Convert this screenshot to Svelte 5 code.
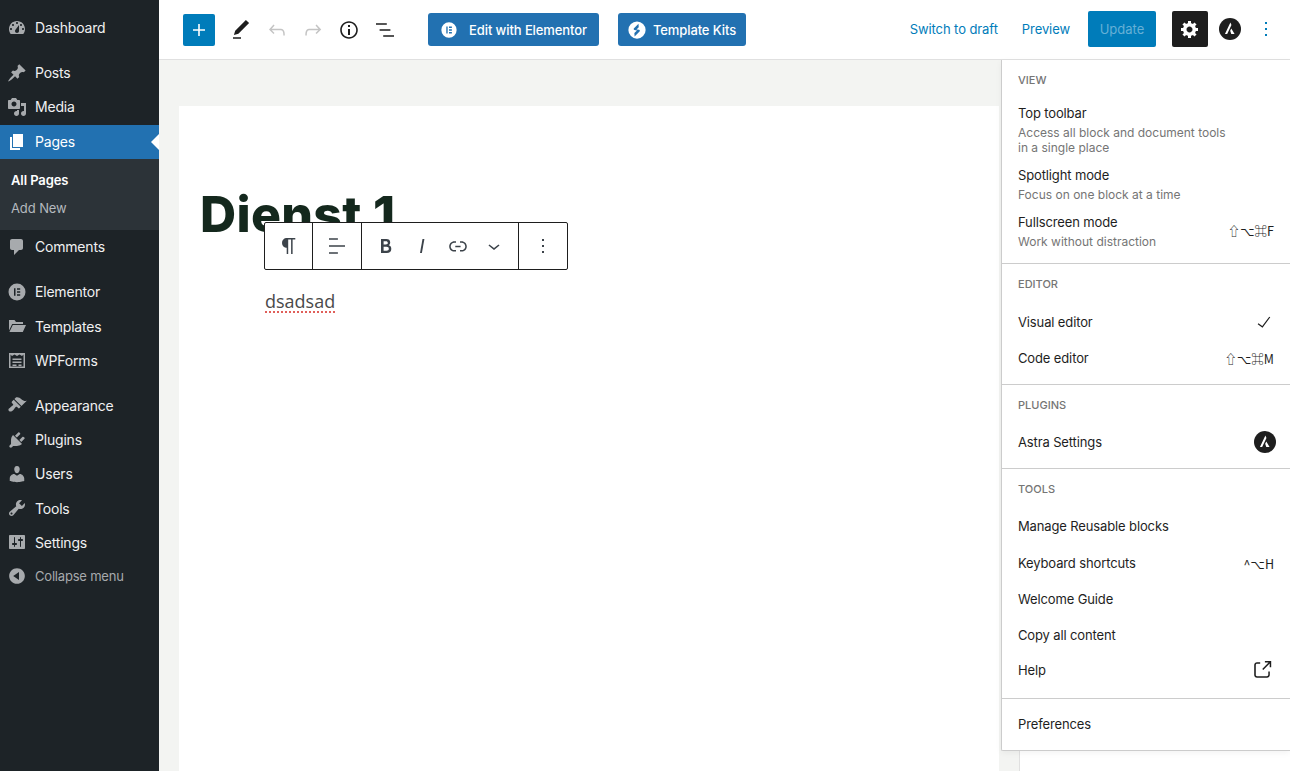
<script lang="ts">
  // Block editor screen: admin menu on the left, editor top bar, canvas, options menu open.
  const dashicons = {
    dashboard: "M3.76 16h12.48c1.1-1.37 1.76-3.11 1.76-5 0-4.42-3.58-8-8-8s-8 3.58-8 8c0 1.89.66 3.63 1.76 5zM10 4c.55 0 1 .45 1 1s-.45 1-1 1-1-.45-1-1 .45-1 1-1zM6 6c.55 0 1 .45 1 1s-.45 1-1 1-1-.45-1-1 .45-1 1-1zm8 0c.55 0 1 .45 1 1s-.45 1-1 1-1-.45-1-1 .45-1 1-1zm-5.37 5.55L12 7v6c0 1.1-.9 2-2 2s-2-.9-2-2c0-.57.24-1.08.63-1.45zM4 10c.55 0 1 .45 1 1s-.45 1-1 1-1-.45-1-1 .45-1 1-1zm12 0c.55 0 1 .45 1 1s-.45 1-1 1-1-.45-1-1 .45-1 1-1z",
    pin: "M10.44 3.02l1.82-1.82 6.36 6.35-1.83 1.82c-1.05-.68-2.48-.57-3.41.36l-.75.75c-.92.93-1.04 2.35-.35 3.41l-1.83 1.82-2.41-2.41-2.8 2.79c-.42.42-3.38 2.71-3.8 2.29s1.86-3.39 2.28-3.81l2.79-2.79L4.1 9.36l1.83-1.82c1.05.69 2.48.57 3.41-.36l.75-.75c.93-.92 1.04-2.35.35-3.41z",
    media: "M13 11V4c0-.55-.45-1-1-1h-1.67L9 1H5L3.67 3H2c-.55 0-1 .45-1 1v7c0 .55.45 1 1 1h10c.55 0 1-.45 1-1zM7 4.5c1.38 0 2.5 1.12 2.5 2.5S8.38 9.5 7 9.5 4.5 8.38 4.5 7 5.62 4.5 7 4.5zM14 6h5v10.5c0 1.38-1.12 2.5-2.5 2.5S14 17.88 14 16.5s1.12-2.5 2.5-2.5c.17 0 .34.02.5.05V9h-3V6zm-4 8.05V13h2v3.5c0 1.38-1.12 2.5-2.5 2.5S7 17.88 7 16.5 8.12 14 9.5 14c.17 0 .34.02.5.05z",
    page: "M6 15V2h10v13H6zm-1 1h8v2H3V5h2v11z",
    comment: "M5 2h9c1.1 0 2 .9 2 2v7c0 1.1-.9 2-2 2h-2l-5 5v-5H5c-1.1 0-2-.9-2-2V4c0-1.1.9-2 2-2z",
    elementor: "M10 1.5a8.5 8.5 0 1 0 0 17 8.5 8.5 0 0 0 0-17zM7 6.2h1.5v7.6H7zm3 0h3.2v1.5H10zm0 3h3.2v1.5H10zm0 3.1h3.2v1.5H10z",
    folder: "M2 4h5.5l1.5 2h7v2H5.2L2 14.5zM5.8 9H19l-3.2 7H2.4z",
    forms: "M2 3h16v15H2zm1.5 1.5v12h13v-12l-1.5 1.5-2.5-1.5L10 6 7.5 4.5 5 6zm2 4h9v1.5h-9zm0 3h9v1.5h-9zm0 3h4v1.5h-4zm6 0h3v1.5h-3z",
    brush: "M14.48 11.06L7.41 3.99l1.5-1.5c.5-.56 2.3-.47 3.51.32 1.21.8 1.43 1.28 2.91 2.1 1.18.64 2.45 1.26 4.45.85zm-.71.71L6.7 4.7 4.93 6.47c-.39.39-.39 1.02 0 1.41l1.06 1.06c.39.39.39 1.03 0 1.42-.6.6-1.43 1.11-2.21 1.69-.35.26-.7.53-1.01.84C1.43 13.23.91 14.93 2 16.03c1.08 1.08 2.79.56 4.15-.78.31-.31.58-.66.85-1.01.58-.78 1.09-1.61 1.69-2.21.39-.39 1.02-.39 1.41 0l1.06 1.06c.39.39 1.02.39 1.41 0z",
    plugin: "M13.11 4.36L9.87 7.6 8 5.73l3.24-3.24c.35-.34 1.05-.2 1.56.32.52.51.66 1.21.31 1.55zm-8 1.77l.91-1.12 9.01 9.01-1.19.84c-.71.71-2.63 1.16-3.82 1.16H6.14L4.9 17.26c-.59.59-1.54.59-2.12 0-.59-.58-.59-1.53 0-2.12l1.24-1.24v-3.88c0-1.13.4-3.19 1.09-3.89zm7.26 3.97l3.24-3.24c.34-.35 1.04-.21 1.55.31.52.51.66 1.21.31 1.55l-3.24 3.25z",
    users: "M10 9.25c-2.27 0-2.73-3.44-2.73-3.44C7 4.02 7.82 2 9.97 2c2.16 0 2.98 2.02 2.71 3.81 0 0-.41 3.44-2.68 3.44zm0 2.57L12.72 10c2.39 0 4.52 2.33 4.52 4.53v2.49s-3.65 1.13-7.24 1.13c-3.65 0-7.24-1.13-7.24-1.13v-2.49c0-2.25 1.94-4.48 4.47-4.48z",
    tools: "M16.68 9.77c-1.34 1.34-3.3 1.67-4.95.99l-5.41 6.52c-.99.99-2.59.99-3.58 0s-.99-2.59 0-3.57l6.52-5.42c-.68-1.65-.35-3.61.99-4.95 1.28-1.28 3.12-1.62 4.72-1.06l-2.89 2.89 2.82 2.82 2.86-2.87c.53 1.58.18 3.39-1.08 4.65zM3.81 16.21c.4.39 1.04.39 1.43 0 .4-.4.4-1.04 0-1.43-.39-.4-1.03-.4-1.43 0-.39.39-.39 1.03 0 1.43z",
    settings: "M18 16V4c0-.55-.45-1-1-1H3c-.55 0-1 .45-1 1v12c0 .55.45 1 1 1h14c.55 0 1-.45 1-1zM8 11h1c.55 0 1 .45 1 1s-.45 1-1 1H8v1.5c0 .28-.22.5-.5.5s-.5-.22-.5-.5V13H6c-.55 0-1-.45-1-1s.45-1 1-1h1V5.5c0-.28.22-.5.5-.5s.5.22.5.5V11zm5-2h-1c-.55 0-1-.45-1-1s.45-1 1-1h1V5.5c0-.28.22-.5.5-.5s.5.22.5.5V7h1c.55 0 1 .45 1 1s-.45 1-1 1h-1v5.5c0 .28-.22.5-.5.5s-.5-.22-.5-.5V9z",
    collapse: "M10 2.16c4.33 0 7.84 3.51 7.84 7.84s-3.51 7.84-7.84 7.84S2.16 14.33 2.16 10 5.71 2.16 10 2.16zm2 11.72V6.12L6.18 9.97z",
  };

  const wp = {
    plus: "M18 11.2h-5.2V6h-1.6v5.2H6v1.6h5.2V18h1.6v-5.2H18z",
    pencil: "M20.1 5.1L16.9 2 6.2 12.7l-1.3 4.4 4.5-1.3L20.1 5.1zM4 20.8h8v-1.5H4v1.5z",
    undo: "M18.3 11.7c-.6-.6-1.4-.9-2.3-.9H6.7l2.9-3.3-1.1-1-4.5 5L8.5 16l1-1-2.7-2.7H16c.5 0 .9.2 1.3.5 1 1 1 3.4 1 4.5v.3h1.5v-.2c0-1.5 0-4.3-1.5-5.7z",
    redo: "M15.6 6.5l-1.1 1 2.9 3.3H8c-.9 0-1.7.3-2.3.9-1.4 1.5-1.4 4.2-1.4 5.6v.2h1.5v-.3c0-1.1 0-3.5 1-4.5.3-.3.7-.5 1.3-.5h9.2L14.5 15l1.1 1.1 4.6-4.6-4.6-5z",
    info: "M12 3.2c-4.8 0-8.8 3.9-8.8 8.8 0 4.8 3.9 8.8 8.8 8.8 4.8 0 8.8-3.9 8.8-8.8 0-4.8-4-8.8-8.8-8.8zm0 16c-4 0-7.2-3.3-7.2-7.2C4.8 8 8 4.8 12 4.8s7.2 3.3 7.2 7.2c0 4-3.2 7.2-7.2 7.2zM11 17h2v-6h-2v6zm0-8h2V7h-2v2z",
    list: "M13.8 5.2H3v1.5h10.8V5.2zm-3.6 12v1.5H21v-1.5H10.2zm7.2-6H6.6v1.5h10.8v-1.5z",
    cog: "M20 14h-2.18c-.17.7-.44 1.35-.81 1.93l1.54 1.54-2.1 2.1-1.54-1.54c-.58.36-1.23.63-1.91.79V21h-3v-2.18c-.68-.16-1.33-.43-1.91-.79l-1.54 1.54-2.12-2.12 1.54-1.54c-.36-.58-.63-1.23-.79-1.91H3v-2.97h2.17c.16-.7.44-1.35.8-1.94L4.43 7.55l2.1-2.1 1.54 1.54c.58-.37 1.24-.64 1.93-.81V4h3v2.18c.68.16 1.33.43 1.91.79l1.54-1.54 2.12 2.12-1.54 1.54c.36.59.64 1.24.8 1.94H20V14zm-8.5 1.5c1.66 0 3-1.34 3-3s-1.34-3-3-3-3 1.34-3 3 1.34 3 3 3z",
    more: "M13 19h-2v-2h2v2zm0-6h-2v-2h2v2zm0-6h-2V5h2v2z",
    para: "M18.3 4H9.9v-.1l-.9.2c-2.3.4-4 2.4-4 4.8s1.7 4.4 4 4.8l.7.1V20h1.5V5.5h2.9V20h1.5V5.5h2.7V4z",
    align: "M4 19.8h8.9v-1.5H4v1.5zm8.9-15.6H4v1.5h8.9V4.2zm-8.9 7v1.5h16v-1.5H4z",
    bold: "M14.7 11.3c1-.6 1.5-1.6 1.5-3 0-2.3-1.3-3.4-4-3.4H7v14h5.8c1.4 0 2.5-.3 3.3-1 .8-.7 1.2-1.7 1.2-2.9.1-1.9-.8-3.1-2.6-3.7zm-5.1-4h2.3c.6 0 1.1.1 1.4.4.3.3.5.7.5 1.2s-.2 1-.5 1.2c-.3.3-.8.4-1.4.4H9.6V7.3zm4.6 9c-.4.3-1 .4-1.7.4H9.6v-3.9h2.9c.7 0 1.3.2 1.7.5.4.3.6.8.6 1.5s-.2 1.2-.6 1.5z",
    italic: "M12.5 5L10 19h1.9l2.5-14z",
    link: "M15.6 7.2H14v1.5h1.6c2 0 3.7 1.7 3.7 3.7s-1.7 3.7-3.7 3.7H14v1.5h1.6c2.8 0 5.2-2.3 5.2-5.2 0-2.9-2.3-5.2-5.2-5.2zM4.7 12.4c0-2 1.7-3.7 3.7-3.7H10V7.2H8.4c-2.9 0-5.2 2.3-5.2 5.2 0 2.9 2.3 5.2 5.2 5.2H10v-1.5H8.4c-2 0-3.7-1.7-3.7-3.7zm4.6.9h5.3v-1.5H9.3v1.5z",
    chevron: "M17.5 11.6L12 16l-5.5-4.4.9-1.2L12 14l4.5-3.6 1 1.2z",
    check: "M18.3 5.6L9.9 16.9l-4.6-3.4-.9 1.2 5.8 4.3 9.3-12.6z",
    external: "M18.2 17c0 .7-.6 1.2-1.2 1.2H7c-.7 0-1.2-.6-1.2-1.2V7c0-.7.6-1.2 1.2-1.2h3.2V4.2H7C5.5 4.2 4.2 5.5 4.2 7v10c0 1.5 1.2 2.8 2.8 2.8h10c1.5 0 2.8-1.2 2.8-2.8v-3.6h-1.5V17zM14.9 3v1.5h3.7l-6.4 6.4 1.1 1.1 6.4-6.4v3.7h1.5V3h-6.8z",
  };

  const astra = "M12.4 5 6.5 17.5h2.4L13.6 7.6zM13.4 11.5l-1.2 2.5 1.2 3.5h3.6z";
  const bolt = "M14 3.5 8 9.8c-.8.9-.4 2 .7 2.2l3.3.5-3.5 3.6.3 4.4 6.6-6.6c.8-.9.4-2-.7-2.2L11.3 11.3l3-3z";

  const menuGroups = [
    [{ label: "Dashboard", icon: dashicons.dashboard }],
    [
      { label: "Posts", icon: dashicons.pin },
      { label: "Media", icon: dashicons.media },
      { label: "Pages", icon: dashicons.page, active: true, sub: ["All Pages", "Add New"] },
      { label: "Comments", icon: dashicons.comment },
    ],
    [
      { label: "Elementor", icon: dashicons.elementor },
      { label: "Templates", icon: dashicons.folder },
      { label: "WPForms", icon: dashicons.forms },
    ],
    [
      { label: "Appearance", icon: dashicons.brush },
      { label: "Plugins", icon: dashicons.plugin },
      { label: "Users", icon: dashicons.users },
      { label: "Tools", icon: dashicons.tools },
      { label: "Settings", icon: dashicons.settings },
      { label: "Collapse menu", icon: dashicons.collapse, muted: true },
    ],
  ];

  const sections = [
    {
      title: "Editor",
      rows: [
        { label: "Visual editor", check: true },
        { label: "Code editor", keys: "⇧⌥⌘M" },
      ],
    },
    { title: "Plugins", rows: [{ label: "Astra Settings", astra: true }] },
    {
      title: "Tools",
      rows: [
        { label: "Manage Reusable blocks" },
        { label: "Keyboard shortcuts", keys: "^⌥H" },
        { label: "Welcome Guide" },
        { label: "Copy all content" },
        { label: "Help", external: true },
      ],
    },
  ];
</script>

{#snippet icon(d, size = 24, box = 24)}
  <svg class="ic" width={size} height={size} viewBox="0 0 {box} {box}" fill="currentColor" aria-hidden="true"><path {d} /></svg>
{/snippet}

<div class="screen">
  <nav class="adminmenu">
    {#each menuGroups as group}
      <ul class="group">
        {#each group as item}
          <li class="item" class:active={item.active} class:muted={item.muted}>
            {@render icon(item.icon, 20, 20)}
            <span>{item.label}</span>
          </li>
          {#if item.sub}
            <ul class="sub">
              <li class="current">{item.sub[0]}</li>
              <li>{item.sub[1]}</li>
            </ul>
          {/if}
        {/each}
      </ul>
    {/each}
  </nav>

  <div class="editor">
    <header class="topbar">
      <div class="left">
        <button class="inserter">{@render icon(wp.plus)}</button>
        <div class="tools">
          <button>{@render icon(wp.pencil)}</button>
          <button class="off">{@render icon(wp.undo)}</button>
          <button class="off">{@render icon(wp.redo)}</button>
          <button>{@render icon(wp.info)}</button>
          <button>{@render icon(wp.list)}</button>
        </div>
        <button class="blue elementor">
          <svg width="18" height="18" viewBox="0 0 20 20" aria-hidden="true"><path fill="#fff" d={dashicons.elementor} /></svg>
          Edit with Elementor
        </button>
        <button class="blue kits">
          <svg width="18" height="18" viewBox="0 0 24 24" aria-hidden="true"><circle cx="12" cy="12" r="11.5" fill="#fff" /><path fill="#2271b1" d={bolt} /></svg>
          Template Kits
        </button>
      </div>
      <div class="right">
        <a href="#draft">Switch to draft</a>
        <a href="#preview">Preview</a>
        <button class="update">Update</button>
        <button class="settings">{@render icon(wp.cog)}</button>
        <svg class="astra-top" width="22" height="22" viewBox="0 0 24 24" aria-hidden="true"><circle cx="12" cy="12" r="12" fill="#1e1e1e" /><path fill="#fff" d={astra} /></svg>
        <button class="dots">{@render icon(wp.more)}</button>
      </div>
    </header>

    <div class="body">
      <main class="canvas">
        <div class="paper">
          <h1>Dienst 1</h1>
          <p><span class="typo">dsadsad</span></p>
          <div class="blocktools">
            <div class="tgroup wide">{@render icon(wp.para)}</div>
            <div class="tgroup wide second">{@render icon(wp.align)}</div>
            <div class="tgroup">
              <span class="cell">{@render icon(wp.bold)}</span>
              <span class="cell">{@render icon(wp.italic)}</span>
              <span class="cell">{@render icon(wp.link)}</span>
              <span class="cell">{@render icon(wp.chevron)}</span>
            </div>
            <div class="tgroup wide last">{@render icon(wp.more)}</div>
          </div>
        </div>
      </main>
      <aside class="inspector"></aside>
    </div>

    <div class="options">
      <section class="view">
        <h2>View</h2>
        <div class="opt">
          <b>Top toolbar</b>
          <small>Access all block and document tools<br />in a single place</small>
        </div>
        <div class="opt">
          <b>Spotlight mode</b>
          <small>Focus on one block at a time</small>
        </div>
        <div class="opt withkeys">
          <div>
            <b>Fullscreen mode</b>
            <small>Work without distraction</small>
          </div>
          <kbd>⇧⌥⌘F</kbd>
        </div>
      </section>
      {#each sections as s}
        <section>
          <h2>{s.title}</h2>
          {#each s.rows as r}
            <div class="row">
              <span>{r.label}</span>
              {#if r.keys}<kbd>{r.keys}</kbd>{/if}
              {#if r.check}{@render icon(wp.check, 20)}{/if}
              {#if r.external}{@render icon(wp.external)}{/if}
              {#if r.astra}
                <svg class="astra-row" width="22" height="22" viewBox="0 0 24 24" aria-hidden="true"><circle cx="12" cy="12" r="12" fill="#1e1e1e" /><path fill="#fff" d={astra} /></svg>
              {/if}
            </div>
          {/each}
        </section>
      {/each}
      <section class="prefs">
        <div class="row"><span>Preferences</span></div>
      </section>
    </div>
  </div>
</div>

<style>
  :global(body) {
    margin: 0;
    background: #fff;
    font-family: Inter, "Liberation Sans", sans-serif;
  }
  .screen {
    display: flex;
    width: 1290px;
    height: 771px;
    overflow: hidden;
  }
  ul {
    list-style: none;
    margin: 0;
    padding: 0;
  }
  button {
    border: 0;
    background: none;
    padding: 0;
    font: inherit;
    color: inherit;
    display: flex;
    align-items: center;
    justify-content: center;
  }
  .ic {
    display: block;
    flex: none;
  }

  /* admin menu */
  .adminmenu {
    width: 159px;
    flex: none;
    background: #1d2327;
    padding-top: 10.5px;
    box-sizing: border-box;
  }
  .group {
    margin-bottom: 11px;
  }
  .item {
    height: 34.2px;
    display: flex;
    align-items: center;
    gap: 8px;
    padding-left: 7px;
    font-size: 14px;
    letter-spacing: -0.2px;
    color: #f0f0f1;
    position: relative;
  }
  .item .ic {
    color: #a7aaad;
    width: 20px;
    height: 20px;
  }
  .item.active {
    margin-top: 0.6px;
    background: #2271b1;
    color: #fff;
  }
  .item.active .ic {
    color: #fff;
  }
  .item.active::after {
    content: "";
    position: absolute;
    right: 0;
    top: 50%;
    margin-top: -8px;
    border: 8px solid transparent;
    border-left: 0;
    border-right-color: #fff;
  }
  .item.muted,
  .item.muted .ic {
    color: #a7aaad;
    font-size: 13px;
  }
  .sub {
    height: 70.8px;
    background: #2c3338;
    padding: 7px 0 0 11px;
    box-sizing: border-box;
    font-size: 13px;
    letter-spacing: -0.1px;
    color: #b4b9be;
  }
  .sub li {
    height: 28px;
    line-height: 28px;
  }
  .sub .current {
    color: #fff;
    font-weight: 600;
  }

  /* top bar */
  .editor {
    flex: 1;
    min-width: 0;
    display: flex;
    flex-direction: column;
    position: relative;
  }
  .topbar {
    height: 60px;
    flex: none;
    box-sizing: border-box;
    border-bottom: 1px solid #e0e0e0;
    background: #fff;
    display: flex;
    align-items: center;
    justify-content: space-between;
    padding: 0 12px 0 24px;
  }
  .left,
  .right,
  .tools {
    display: flex;
    align-items: center;
  }
  .right {
    margin-top: -1px;
  }
  .inserter {
    width: 32px;
    height: 32px;
    background: #007cba;
    color: #fff;
    border-radius: 2px;
  }
  .tools {
    margin-left: 8px;
    color: #1e1e1e;
  }
  .tools button {
    width: 36px;
    height: 36px;
  }
  .tools .off {
    color: #c4c4c4;
  }
  .blue {
    height: 33px;
    background: #2271b1;
    color: #fff;
    border-radius: 3px;
    font-size: 13px;
    font-weight: 500;
    letter-spacing: -0.1px;
    white-space: nowrap;
  }
  .elementor {
    width: 171px;
    margin-left: 25px;
    gap: 11px;
  }
  .kits {
    width: 128px;
    margin-left: 19px;
    gap: 7px;
  }
  .right a {
    font-size: 13px;
    letter-spacing: -0.08px;
    color: #007cba;
    text-decoration: none;
    margin-right: 24px;
  }
  .right a:nth-child(2) {
    margin-right: 18px;
  }
  .update {
    width: 68px;
    height: 36px;
    background: #007cba;
    color: #66b0d6;
    font-size: 13px;
    border-radius: 2px;
  }
  .settings {
    width: 36px;
    height: 36px;
    margin-left: 16px;
    background: #1e1e1e;
    color: #fff;
    border-radius: 2px;
  }
  .astra-top {
    margin-left: 11px;
  }
  .dots {
    width: 24px;
    height: 36px;
    margin-left: 13px;
    color: #007cba;
  }

  /* canvas */
  .body {
    flex: 1;
    display: flex;
    min-height: 0;
  }
  .canvas {
    width: 860px;
    flex: none;
    box-sizing: border-box;
    background: #f3f4f2;
    padding: 46px 20px 0;
  }
  .paper {
    height: 100%;
    background: #fff;
    position: relative;
    padding: 1px 21px 0;
    box-sizing: border-box;
  }
  .inspector {
    flex: 1;
    background: #fff;
    border-left: 1px solid #e0e0e0;
  }
  h1 {
    margin: 77px 0 0;
    font-family: Inter, sans-serif;
    font-weight: 800;
    font-size: 50px;
    letter-spacing: 0.3px;
    line-height: 60px;
    color: #14281d;
  }
  p {
    margin: 45px 0 0 65px;
    font-family: "Open Sans", sans-serif;
    font-size: 18px;
    line-height: 24px;
    color: #4a4a4a;
  }
  .typo {
    text-decoration: underline dotted #e0605a 2px;
    text-underline-offset: 3px;
  }
  .blocktools {
    position: absolute;
    left: 85px;
    top: 116px;
    height: 48px;
    box-sizing: border-box;
    display: flex;
    background: #fff;
    border: 1px solid #1e1e1e;
    border-radius: 2px;
    color: #3c434a;
  }
  .tgroup {
    display: flex;
    align-items: center;
    justify-content: center;
    border-right: 1px solid #1e1e1e;
    padding: 0 6px;
  }
  .tgroup.wide {
    width: 48px;
    padding: 0;
    box-sizing: border-box;
  }
  .tgroup.second {
    width: 49px;
  }
  .tgroup.last {
    border-right: 0;
  }
  .cell {
    width: 36px;
    display: flex;
    justify-content: center;
  }

  /* options dropdown */
  .options {
    position: absolute;
    top: 60px;
    right: 0;
    width: 289px;
    box-sizing: border-box;
    background: #fff;
    border: 1px solid #ccc;
    border-width: 0 0 1px 1px;
    border-radius: 0 0 0 2px;
    box-shadow: 0 2px 6px rgba(0, 0, 0, 0.05);
    color: #1e1e1e;
    font-size: 13px;
    letter-spacing: -0.13px;
  }
  section {
    padding: 12px 16px 8px;
    border-top: 1px solid #ccc;
  }
  section:first-child {
    border-top: 0;
    padding-top: 12px;
    padding-bottom: 14px;
  }
  section:nth-child(n + 3) h2 {
    margin-bottom: 11px;
  }
  section:nth-child(4) {
    padding-bottom: 11px;
  }
  section:nth-child(4) .row:nth-child(2) {
    margin-bottom: 1px;
  }
  section:nth-child(4) .row:last-child {
    height: 34px;
  }
  h2 {
    margin: 0 0 12px;
    font-size: 11px;
    line-height: 16px;
    font-weight: 500;
    letter-spacing: 0;
    text-transform: uppercase;
    color: #757575;
  }
  .opt {
    margin-bottom: 10px;
  }
  .opt:last-child {
    margin-bottom: 0;
  }
  .view h2 {
    margin-bottom: 15px;
  }
  b {
    display: block;
    font-weight: 400;
    line-height: 20px;
  }
  small {
    display: block;
    margin-top: 2px;
    font-size: 12px;
    line-height: 15px;
    letter-spacing: 0;
    color: #757575;
  }
  .withkeys,
  .row {
    display: flex;
    align-items: center;
    justify-content: space-between;
  }
  .row {
    height: 36px;
  }
  kbd {
    font-family: "Noto Sans CJK JP", "DejaVu Sans", sans-serif;
    font-size: 12.5px;
    letter-spacing: 0;
    color: #1e1e1e;
  }
  .prefs {
    padding-bottom: 8px;
    padding-top: 7px;
  }
  .astra-row {
    margin-right: -2px;
  }
</style>
